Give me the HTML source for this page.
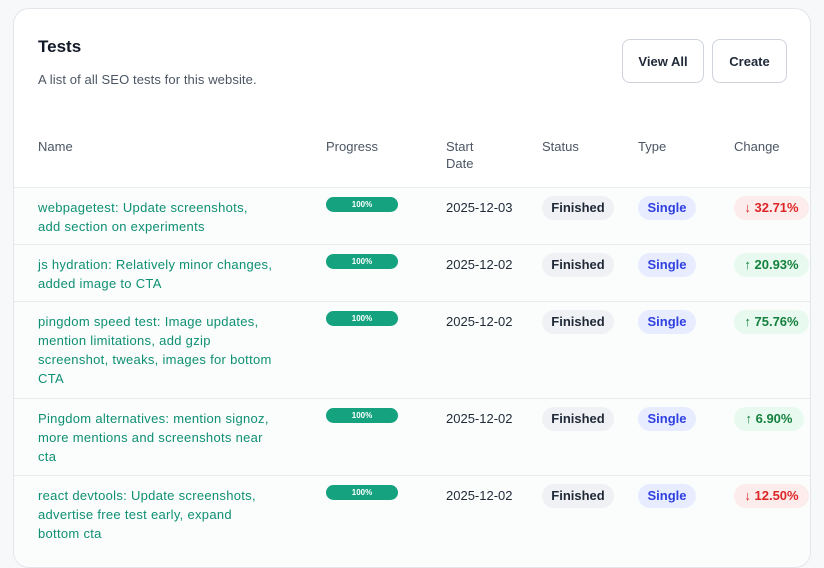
<!DOCTYPE html>
<html><head><style>
*{margin:0;padding:0;box-sizing:border-box}
body{width:824px;height:547px;overflow:hidden;background:#f7f8fa;font-family:"Liberation Sans",sans-serif;position:relative}
.card{position:absolute;left:13px;top:8px;width:798px;height:560px;background:#fff;border:1px solid #e2e5ea;border-radius:16px;overflow:hidden}
.a{position:absolute;white-space:nowrap}
h1{position:absolute;left:24px;top:28px;font-size:17px;font-weight:bold;color:#111827}
.sub{left:24px;top:63px;font-size:13px;color:#4b5563;letter-spacing:.1px}
.btn{position:absolute;top:30px;height:44px;border:1px solid #cfd3db;border-radius:8px;font-size:13px;font-weight:bold;color:#1f2937;display:flex;align-items:center;justify-content:center}
.th{font-size:13px;color:#4b5563;top:129px;line-height:17px}
.row{position:absolute;left:0;width:798px;background:#fafdfc;border-top:1px solid #e8ecef}
.nm{position:absolute;left:24px;top:10px;font-size:13px;line-height:19px;color:#0f8f73;white-space:nowrap;letter-spacing:.3px}
.pb{position:absolute;left:312px;top:9px;width:72px;height:15px;border-radius:8px;background:#14a27f;color:#fff;font-size:8px;font-weight:bold;text-align:center;line-height:15px}
.dt{position:absolute;left:432px;top:10px;font-size:13px;color:#1f2937;line-height:19px}
.bd{position:absolute;top:8px;height:24px;border-radius:12px;font-size:13px;font-weight:bold;line-height:24px;text-align:center}
.st{left:528px;width:72px;background:#f0f1f4;color:#1f2937}
.ty{left:624px;width:58px;background:#e7edff;color:#2f3fe0}
.ch{left:720px;width:75px;border-radius:12px}
.dn{background:#fdecec;color:#dc2626}
.up{background:#e8faef;color:#15803d}
</style></head><body>
<div class="card">
<h1>Tests</h1>
<div class="a sub">A list of all SEO tests for this website.</div>
<div class="btn" style="left:608px;width:82px">View All</div>
<div class="btn" style="left:698px;width:75px">Create</div>
<div class="a th" style="left:24px">Name</div>
<div class="a th" style="left:312px">Progress</div>
<div class="a th" style="left:432px">Start<br>Date</div>
<div class="a th" style="left:528px">Status</div>
<div class="a th" style="left:624px">Type</div>
<div class="a th" style="left:720px">Change</div>

<div class="row" style="top:178px;height:57px"><div class="nm">webpagetest: Update screenshots,<br>add section on experiments</div><div class="pb">100%</div><div class="dt">2025-12-03</div><div class="bd st">Finished</div><div class="bd ty">Single</div><div class="bd ch dn">↓ 32.71%</div></div>
<div class="row" style="top:235px;height:57px"><div class="nm">js hydration: Relatively minor changes,<br>added image to CTA</div><div class="pb">100%</div><div class="dt">2025-12-02</div><div class="bd st">Finished</div><div class="bd ty">Single</div><div class="bd ch up">↑ 20.93%</div></div>
<div class="row" style="top:292px;height:97px"><div class="nm">pingdom speed test: Image updates,<br>mention limitations, add gzip<br>screenshot, tweaks, images for bottom<br>CTA</div><div class="pb">100%</div><div class="dt">2025-12-02</div><div class="bd st">Finished</div><div class="bd ty">Single</div><div class="bd ch up">↑ 75.76%</div></div>
<div class="row" style="top:389px;height:77px"><div class="nm">Pingdom alternatives: mention signoz,<br>more mentions and screenshots near<br>cta</div><div class="pb">100%</div><div class="dt">2025-12-02</div><div class="bd st">Finished</div><div class="bd ty">Single</div><div class="bd ch up" style="width:70px">↑ 6.90%</div></div>
<div class="row" style="top:466px;height:97px"><div class="nm">react devtools: Update screenshots,<br>advertise free test early, expand<br>bottom cta</div><div class="pb">100%</div><div class="dt">2025-12-02</div><div class="bd st">Finished</div><div class="bd ty">Single</div><div class="bd ch dn">↓ 12.50%</div></div>
</div>
</body></html>
